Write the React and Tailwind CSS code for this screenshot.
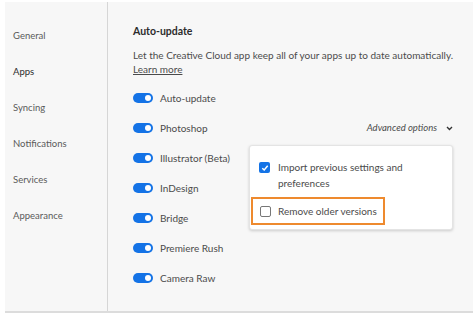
import React from "react";

const font = { fontFamily: "Lato, 'Noto Sans', sans-serif" };

function Toggle() {
  return (
    <div className="relative w-[20px] h-[10px] rounded-full bg-[#1473e6] shrink-0">
      <div className="absolute right-[2px] top-[2px] w-[6px] h-[6px] rounded-full bg-white" />
    </div>
  );
}

function Row({ label, children }) {
  return (
    <div className="h-[30px] flex items-center">
      <Toggle />
      <span className="ml-[7px] text-[10px] text-[#4b4b4b]">{label}</span>
      {children}
    </div>
  );
}

export default function App() {
  const nav = ["General", "Apps", "Syncing", "Notifications", "Services", "Appearance"];
  return (
    <div className="w-[473px] h-[314px] bg-white pl-[5px] pt-[2px] relative overflow-hidden" style={font}>
      <div className="h-[311px] bg-[#f7f7f7] border-b-2 border-[#dcdcdc] flex">
        <div className="w-[103px] shrink-0 border-r-[1.5px] border-[#d6d6d6] pt-[16px] pl-[8px]">
          {nav.map((n) => (
            <div
              key={n}
              className={`h-[36px] flex items-center text-[9.5px] ${n === "Apps" ? "text-[#2c2c2c]" : "text-[#5a5a5a]"}`}
            >
              {n}
            </div>
          ))}
        </div>
        <div className="flex-1 pl-[25px] pr-[24px] pt-[22px]">
          <div className="h-[14px] leading-[14px] text-[10.5px] font-bold text-[#2c2c2c]">Auto-update</div>
          <div className="mt-[10px] text-[10px] leading-[14px] text-[#4b4b4b] whitespace-nowrap">
            <div>Let the Creative Cloud app keep all of your apps up to date automatically.</div>
            <div className="underline">Learn more</div>
          </div>
          <div className="mt-[7px] flex flex-col">
            <Row label="Auto-update" />
            <Row label="Photoshop">
              <div className="ml-auto flex items-center gap-[9px] text-[9.5px] italic text-[#4b4b4b]">
                <span>Advanced options</span>
                <svg width="7" height="5" viewBox="0 0 7 5">
                  <path d="M1 1 L3.5 3.5 L6 1" fill="none" stroke="#333" strokeWidth="1.4" />
                </svg>
              </div>
            </Row>
            <Row label="Illustrator (Beta)" />
            <Row label="InDesign" />
            <Row label="Bridge" />
            <Row label="Premiere Rush" />
            <Row label="Camera Raw" />
          </div>
        </div>
      </div>

      <div className="absolute left-[249px] top-[145px] w-[204px] h-[85px] bg-white rounded-[3px] border border-[#e4e4e4] shadow-[0_1px_3px_rgba(0,0,0,0.18)]">
        <div className="flex items-start pl-[9px] pt-[13px]">
          <div className="w-[11px] h-[11px] mt-[3px] rounded-[2px] bg-[#1473e6] flex items-center justify-center shrink-0">
            <svg width="8" height="8" viewBox="0 0 8 8">
              <path d="M1.3 4.2 L3.2 6 L6.7 1.8" fill="none" stroke="white" strokeWidth="1.5" />
            </svg>
          </div>
          <div className="ml-[8px] text-[10px] leading-[16px] text-[#4b4b4b]">
            <div>Import previous settings and</div>
            <div>preferences</div>
          </div>
        </div>
        <div className="ml-[1px] mt-[6px] w-[134px] h-[28px] border-2 border-[#ee8a2e] flex items-center pl-[7px]">
          <div className="w-[11px] h-[11px] rounded-[2px] border border-[#777] bg-white shrink-0" />
          <span className="ml-[7px] text-[10px] text-[#4b4b4b]">Remove older versions</span>
        </div>
      </div>
    </div>
  );
}
